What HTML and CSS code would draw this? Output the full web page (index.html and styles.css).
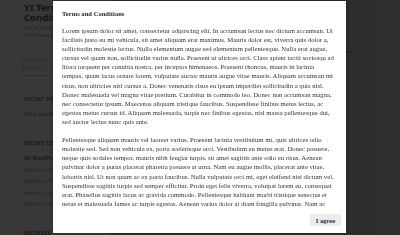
FILE: index.html
```html
<!DOCTYPE html>
<html>
<head>
<meta charset="utf-8">
<title>YI Terms and Conditions</title>
<link rel="stylesheet" href="styles.css">
</head>
<body>
<div class="page">
  <aside class="sidebar">
    <h1 class="site-title">YI Terms and Conditions</h1>
    <p class="site-desc">Just another WordPress site</p>
    <div class="search">Search &hellip;</div>
    <h2 class="widget-title">Recent Posts</h2>
    <ul class="widget-list">
      <li>Hello world!</li>
    </ul>
    <h2 class="widget-title">Recent Comments</h2>
    <ul class="widget-list comments">
      <li><b>Mr WordPress</b> on Hello world!</li>
      <li><span>Marta</span> on WordPress</li>
      <li><span>Marta</span> on Peanut</li>
      <li><span>Marta</span> on WordPress</li>
      <li><span>Marta</span> on Magna</li>
    </ul>
    <h2 class="widget-title archives">Archives</h2>
  </aside>
  <main class="content">
    <div class="content-rule"></div>
    <div class="content-edge"></div>
  </main>
</div>

<div class="modal">
  <div class="modal-title">Terms and Conditions</div>
  <div class="modal-body">
    <p>Lorem ipsum dolor sit amet, consectetur adipiscing elit. In accumsan lectus nec dictum accumsan. Ut<br>
facilisis justo eu mi vehicula, sit amet aliquam erat maximus. Mauris dolor est, viverra quis dolor a,<br>
sollicitudin molestie lectus. Nulla elementum augue sed elementum pellentesque. Nulla erat augue,<br>
cursus vel quam non, sollicitudin varius nulla. Praesent ut ultrices orci. Class aptent taciti sociosqu ad<br>
litora torquent per conubia nostra, per inceptos himenaeos. Praesent rhoncus, mauris in lacinia<br>
tempus, quam lacus ornare lorem, vulputate auctor mauris augue vitae mauris. Aliquam accumsan mi<br>
risus, non ultricies nisl cursus a. Donec venenatis risus eu ipsum imperdiet sollicitudin a quis nisl.<br>
Donec malesuada vel magna vitae pretium. Curabitur in commodo leo. Donec non accumsan magna,<br>
nec consectetur ipsum. Maecenas aliquam tristique faucibus. Suspendisse finibus metus lectus, ac<br>
egestas metus cursus id. Aliquam malesuada, turpis nec finibus egestas, nisl massa pellentesque dui,<br>
sed auctor lectus nunc quis ante.</p>
    <p>Pellentesque aliquam mauris vel laoreet varius. Praesent lacinia vestibulum mi, quis ultrices odio<br>
molestie sed. Sed non vehicula ex, porta scelerisque orci. Vestibulum eu metus erat. Donec posuere,<br>
neque quis sodales tempor, mauris nibh feugiat turpis, sit amet sagittis ante odio eu risus. Aenean<br>
pulvinar dolor a purus placerat pharetra posuere at urna. Nam eu augue mollis, placerat ante vitae,<br>
lobortis nisl. Ut non quam ac ex porta faucibus. Nulla vulputate orci mi, eget eleifend nisi dictum vel.<br>
Suspendisse sagittis turpis sed semper efficitur. Proin eget felis viverra, volutpat lorem eu, consequat<br>
erat. Phasellus sagittis lacus ac gravida commodo. Pellentesque habitant morbi tristique senectus et<br>
netus et malesuada fames ac turpis egestas. Aenean varius dolor at diam fringilla pulvinar. Nam ac<br>
tellus sed lectus luctus tincidunt.</p>
  </div>
  <div class="modal-actions">
    <button class="agree" type="button">I agree</button>
  </div>
</div>
</body>
</html>
```

FILE: styles.css
```css
html, body {
  margin: 0;
  padding: 0;
  width: 400px;
  height: 235px;
  overflow: hidden;
}

body {
  background: #2d2d2d;
  font-family: "Noto Sans", "Open Sans", sans-serif;
}

.page {
  display: flex;
  height: 235px;
}

.sidebar {
  width: 110px;
  background: #383838;
  padding: 3px 0 0 24px;
  box-sizing: border-box;
  color: #161616;
  overflow: hidden;
}

.site-title {
  margin: 0;
  font-size: 9.5px;
  line-height: 9.5px;
  font-weight: 700;
  color: #131313;
  width: 80px;
}

.site-desc {
  margin: 3px 0 0;
  font-size: 5px;
  line-height: 7px;
  color: #262626;
  width: 40px;
}

.search {
  margin: 20px 0 0 -2px;
  height: 17px;
  border: 1px solid #303030;
  background: #373737;
  box-sizing: border-box;
  font-size: 5px;
  line-height: 15px;
  padding-left: 3px;
  color: #2a2a2a;
}

.widget-title {
  margin: 20px 0 0;
  font-size: 4.6px;
  line-height: 7px;
  font-weight: 700;
  text-transform: uppercase;
  letter-spacing: 0.5px;
  color: #161616;
}

.widget-list {
  list-style: none;
  margin: 8px 0 0;
  padding: 0;
  font-size: 5.2px;
  line-height: 7px;
  color: #1a1a1a;
  white-space: nowrap;
}

.widget-list + .widget-title {
  margin-top: 22px;
}

.widget-list.comments li + li {
  margin-top: 4.6px;
  color: #2a2a2a;
}

.widget-list.comments li span {
  color: #222;
}

.widget-title.archives {
  margin-top: 22px;
}

.content {
  flex: 1;
  position: relative;
  background: #2d2d2d;
}

.content-rule {
  position: absolute;
  left: 236px;
  top: 51px;
  width: 8px;
  height: 1px;
  background: #1f1f1f;
}

.content-edge {
  position: absolute;
  left: 266px;
  top: 0;
  bottom: 0;
  right: 0;
  background: #2f2f2f;
}

.modal {
  position: fixed;
  left: 53px;
  top: 1px;
  width: 293px;
  height: 232px;
  background: #ffffff;
  box-shadow: 0 0 3px rgba(0, 0, 0, 0.35);
  box-sizing: border-box;
  padding: 0 5px 0 9px;
  display: flex;
  flex-direction: column;
  font-family: "Liberation Serif", "DejaVu Serif", serif;
  color: #363636;
}

.modal-title {
  height: 25px;
  line-height: 26px;
  font-size: 6.6px;
  font-weight: 700;
  color: #2a2a2a;
}

.modal-body {
  height: 182px;
  overflow-y: auto;
  font-size: 6.7px;
  line-height: 9.1px;
  white-space: nowrap;
}

.modal-body::-webkit-scrollbar {
  width: 4px;
}

.modal-body::-webkit-scrollbar-track {
  background: #ededed;
}

.modal-body::-webkit-scrollbar-thumb {
  background: #d2d2d2;
}

.modal-body p {
  margin: 0 0 9.1px;
}

.modal-actions {
  display: flex;
  justify-content: flex-end;
  padding-top: 6px;
}

.agree {
  width: 31px;
  height: 12px;
  padding: 0;
  border: 0;
  background: #ebebeb;
  font-family: "Liberation Serif", "DejaVu Serif", serif;
  font-size: 6.6px;
  font-weight: 700;
  color: #333;
  cursor: pointer;
}
```
